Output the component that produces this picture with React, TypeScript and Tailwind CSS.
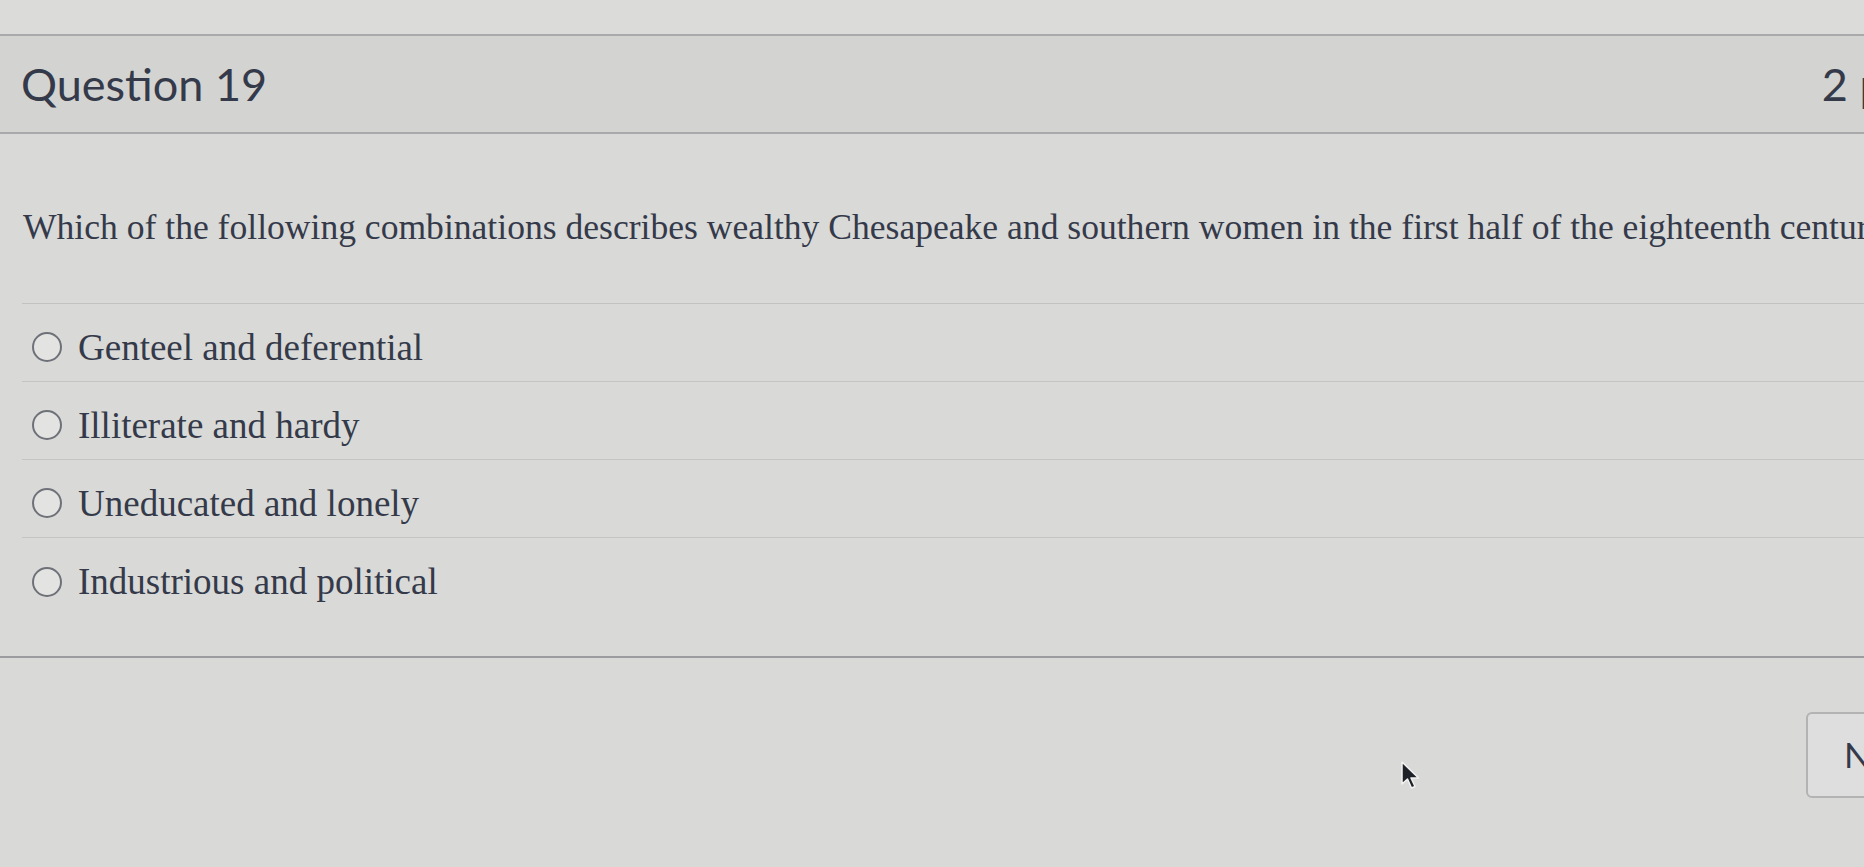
import React from 'react';

const answers = [
  'Genteel and deferential',
  'Illiterate and hardy',
  'Uneducated and lonely',
  'Industrious and political',
];

const App: React.FC = () => {
  return (
    <div className="relative h-[867px] w-full overflow-hidden bg-[#d9d9d7] text-[#343a4a]">
      <div className="w-[1940px]">
        {/* strip above the question card */}
        <div className="h-[34px] bg-[#dbdbd9]" />

        {/* header */}
        <div className="flex h-[100px] items-center justify-between border-y-2 border-[#a9a9ab] bg-[#d3d3d1] pl-[21px] pr-[20px] font-['Lato',sans-serif] text-[45px]">
          <h2 className="leading-none">Question 19</h2>
          <span className="leading-none">2 pts</span>
        </div>

        {/* body */}
        <div className="font-['Liberation_Serif',serif]">
          <p className="whitespace-nowrap px-[23px] pt-[76px] pb-[57px] text-[35.6px] leading-none">
            Which of the following combinations describes wealthy Chesapeake and southern women in the first half of the eighteenth century?
          </p>

          <div className="ml-[22px] border-t border-[#c2c2c2] text-[37px]">
            {answers.map((a, i) => (
              <label
                key={a}
                className={`flex h-[78px] items-center gap-[16px] pl-[10px] pt-[10px] ${i < answers.length - 1 ? 'border-b border-[#c4c4c4]' : ''}`}
              >
                <span className="h-[30px] w-[30px] shrink-0 rounded-full border-2 border-[#6e7178] bg-[#e3e3e1]" />
                <span className="leading-none">{a}</span>
              </label>
            ))}
          </div>

          <div className="mt-[40px] border-t-2 border-[#9c9ca0]" />
        </div>

        {/* footer */}
        <div className="flex pl-[1806px] pt-[54px]">
          <button className="h-[86px] rounded-md border-2 border-[#b3b3b3] bg-[#dedede] px-[36px] font-['Lato',sans-serif] text-[35px] text-[#343a4a]">
            Next
          </button>
        </div>
      </div>

      {/* mouse pointer */}
      <svg
        className="absolute left-[1400px] top-[760px]"
        width="22"
        height="32"
        viewBox="0 0 22 32"
      >
        <path
          d="M2 2 L2 24 L7.5 19 L11.5 28 L15 26.5 L11 18 L18.5 18 Z"
          fill="#1e2128"
          stroke="#f2f2f2"
          strokeWidth="1.5"
          strokeLinejoin="round"
        />
      </svg>
    </div>
  );
};

export default App;
